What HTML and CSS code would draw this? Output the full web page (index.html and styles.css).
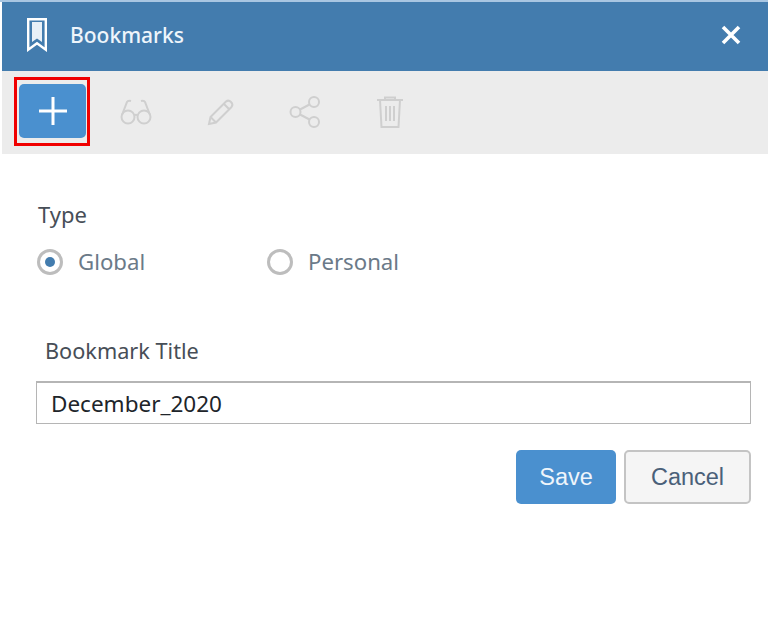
FILE: index.html
```html
<!DOCTYPE html>
<html>
<head>
    <title>Bookmarks</title>
    <link rel="stylesheet" href="styles.css">
</head>
<body>
    <div class="panel">
        <div class="header">
            <svg class="bookmarkIcon" width="20" height="34" viewBox="0 0 20 34" fill="none" stroke="#fff">
                <path d="M1.200 1.200h17.600v30.500l-8.800-6.500-8.800 6.500z" stroke-width="2.400"/>
                <path d="M5 4h10v20l-5-3.500-5 3.500z" fill="#e8f0f7" stroke="none"/>
            </svg>
            <span class="headerTitle">Bookmarks</span>
            <svg class="closeIcon" width="20" height="20" viewBox="0 0 20 20" stroke="#fff" stroke-width="3.600">
                <path d="M2 2l16 16M18 2L2 18"/>
            </svg>
        </div>

        <div class="toolbar">
            <div class="highlight">
                <button class="addButton">
                    <svg width="28" height="28" viewBox="0 0 28 28" stroke="#fff" stroke-width="3">
                        <path d="M14 0v28M0 14h28"/>
                    </svg>
                </button>
            </div>
            <svg class="toolIcon glasses" width="32" height="26" viewBox="0 0 32 26" fill="none" stroke="#cfcfcf" stroke-width="2">
                <circle cx="8" cy="18" r="6.500"/>
                <circle cx="24" cy="18" r="6.500"/>
                <path d="M14 16.500q2-1.500 4 0M2 16L7 3q1-2 4-1M30 16L25 3q-1-2-4-1"/>
            </svg>
            <svg class="toolIcon pencil" width="28" height="28" viewBox="0 0 28 28" fill="none" stroke="#cfcfcf" stroke-width="2">
                <path d="M2 26l1.500-7L19 3.500q2.500-2 5 .5t.5 5L9 24.500z"/>
                <path d="M3.500 19l5.500 5.500M17 6l5 5"/>
            </svg>
            <svg class="toolIcon share" width="32" height="32" viewBox="0 0 32 32" fill="none" stroke="#cfcfcf" stroke-width="2">
                <circle cx="6.500" cy="16" r="5"/>
                <circle cx="25" cy="6" r="5"/>
                <circle cx="25" cy="26" r="5"/>
                <path d="M11 13.500L20.500 8.500M11 18.500l9.500 5"/>
            </svg>
            <svg class="toolIcon trash" width="28" height="32" viewBox="0 0 28 32" fill="none" stroke="#cfcfcf" stroke-width="2">
                <path d="M1 4h26M9 4V1.500h10V4M4 4l1.500 27h17L24 4"/>
                <path d="M10 10v15M14 10v15M18 10v15"/>
            </svg>
        </div>

        <div class="content">
            <div class="typeLabel">Type</div>
            <div class="radioRow">
                <div class="radioOption global">
                    <span class="radio checked"></span>
                    <span>Global</span>
                </div>
                <div class="radioOption">
                    <span class="radio"></span>
                    <span>Personal</span>
                </div>
            </div>

            <div class="titleLabel">Bookmark Title</div>
            <input class="titleInput" type="text" value="December_2020">

            <div class="actions">
                <button class="saveButton">Save</button>
                <button class="cancelButton">Cancel</button>
            </div>
        </div>
    </div>
</body>
</html>
```

FILE: styles.css
```css
html,
body {
    margin: 0;
    padding: 0;
    background-color: #fff;
}

body {
    width: 768px;
    height: 625px;
    overflow: hidden;
    font-family: "Noto Sans", Arial, sans-serif;
}

.panel {
    padding-left: 2px;
    border-top: 2px solid #a9c6e2;
}

.header {
    display: flex;
    align-items: center;
    height: 69px;
    box-sizing: border-box;
    padding: 0 27px 3px 25px;
    background-color: #437cae;
    color: #eef5fb;
}

.bookmarkIcon {
    margin-right: 23px;
}

.headerTitle {
    font-size: 21px;
    font-weight: 500;
    flex: 1;
}

.toolbar {
    display: flex;
    align-items: center;
    height: 83px;
    box-sizing: border-box;
    padding: 0 0 2px 12px;
    background-color: #ececec;
}

.highlight {
    width: 76px;
    height: 69px;
    box-sizing: border-box;
    padding: 4px 0 0 2px;
    border: 3px solid #f00000;
}

.addButton {
    display: flex;
    align-items: center;
    justify-content: center;
    width: 67px;
    height: 54px;
    padding: 0;
    border: none;
    border-radius: 5px;
    background-color: #4a90cf;
}

.glasses {
    margin-left: 30px;
}

.pencil {
    margin-left: 55px;
}

.share {
    margin-left: 54px;
}

.trash {
    margin-left: 55px;
}

.content {
    padding: 46px 17px 0 34px;
}

.typeLabel {
    margin-left: 2px;
    font-size: 22px;
    line-height: 28px;
    color: #474e57;
}

.radioRow {
    display: flex;
    align-items: center;
    margin-top: 20px;
    padding-left: 1px;
    font-size: 22.200px;
    line-height: 28px;
    color: #6b7a88;
}

.radioOption {
    display: flex;
    align-items: center;
    gap: 15px;
}

.global {
    width: 230px;
}

.radio {
    position: relative;
    width: 26px;
    height: 26px;
    box-sizing: border-box;
    border: 3px solid #bdbdbd;
    border-radius: 50%;
    background-color: #fff;
}

.radio.checked::after {
    content: "";
    position: absolute;
    top: 5px;
    left: 5px;
    width: 10px;
    height: 10px;
    border-radius: 50%;
    background-color: #437cae;
}

.titleLabel {
    margin: 61px 0 0 9px;
    font-size: 21.700px;
    line-height: 28px;
    color: #474e57;
}

.titleInput {
    display: block;
    width: 715px;
    height: 43px;
    box-sizing: border-box;
    margin-top: 16px;
    padding: 0 14px;
    border: 1px solid #b5b5b5;
    border-top-width: 2px;
    font-family: "Noto Sans", Arial, sans-serif;
    font-size: 22.500px;
    color: #20242a;
}

.actions {
    display: flex;
    justify-content: flex-end;
    gap: 8px;
    width: 715px;
    margin-top: 26px;
}

.actions button {
    height: 54px;
    border-radius: 5px;
    font-family: "Liberation Sans", Arial, sans-serif;
    font-size: 23.500px;
}

.saveButton {
    width: 100px;
    border: none;
    background-color: #4a90cf;
    color: #eef5fb;
}

.cancelButton {
    width: 127px;
    border: 2px solid #c4c4c4;
    background-color: #f5f5f5;
    color: #4a6079;
}
```
